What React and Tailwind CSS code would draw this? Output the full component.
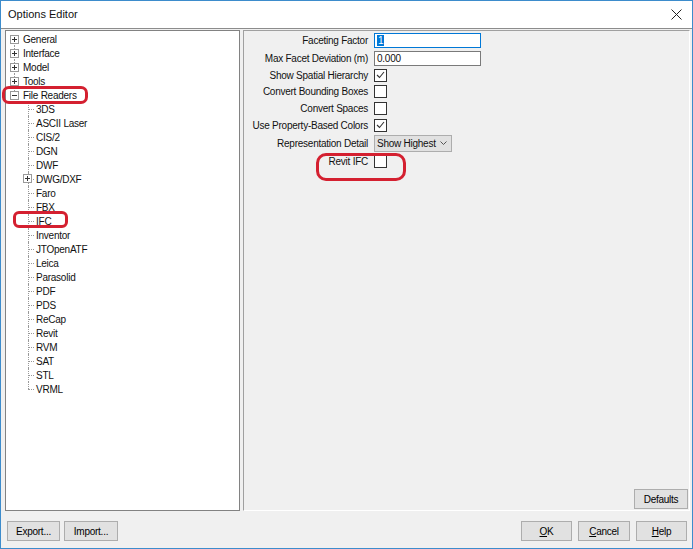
const roots = ["General", "Interface", "Model", "Tools"];
const readers = ["3DS", "ASCII Laser", "CIS/2", "DGN", "DWF", "DWG/DXF", "Faro", "FBX", "IFC", "Inventor", "JTOpenATF", "Leica", "Parasolid", "PDF", "PDS", "ReCap", "Revit", "RVM", "SAT", "STL", "VRML"];

function ExpandBox({ open }) {
  return (
    <div className="relative w-[9px] h-[9px] border border-[#9a9a9a] bg-white shrink-0">
      <div className="absolute left-[1px] top-[3px] w-[5px] h-px bg-[#333]" />
      {!open && <div className="absolute left-[3px] top-[1px] w-px h-[5px] bg-[#333]" />}
    </div>
  );
}

function Check({ checked }) {
  return (
    <div className="w-[13px] h-[13px] border border-[#333] bg-white flex items-center justify-center">
      {checked && (
        <svg width="9" height="8" viewBox="0 0 9 8">
          <path d="M1 4 L3.5 6.5 L8 1" fill="none" stroke="#333" strokeWidth="1.1" />
        </svg>
      )}
    </div>
  );
}

function Btn({ children, className = "" }) {
  return (
    <div className={"h-[20px] flex items-center justify-center bg-[#e1e1e1] border border-[#adadad] text-black " + className}>
      {children}
    </div>
  );
}

function Row({ label, h, children }) {
  return (
    <div className={"flex items-center " + h}>
      <div className="w-[130px] text-right pr-[6px] whitespace-nowrap">{label}</div>
      {children}
    </div>
  );
}

export default function App() {
  return (
    <div
      className="relative w-[693px] h-[549px] flex flex-col bg-[#f0f0f0] border border-[#3d8ccc] text-[10px] tracking-[-0.25px] text-[#111]"
      style={{ fontFamily: '"Liberation Sans", Arial, sans-serif' }}
    >
      <div className="h-[28px] bg-white flex items-center justify-between pl-[7px] pr-[10px] border-b border-[#8c8c8c]">
        <span className="text-[11px] tracking-normal">Options Editor</span>
        <svg width="11" height="11" viewBox="0 0 11 11">
          <path d="M0.5 0.5 L10.5 10.5 M10.5 0.5 L0.5 10.5" stroke="#222" strokeWidth="1" />
        </svg>
      </div>

      <div className="flex h-[482px] pl-[4px] pr-[2px] pt-px gap-[3px]">
        <div className="w-[235px] h-full bg-white border border-[#828282] pt-px">
          {roots.map((r, i) => (
            <div key={r} className="h-[14px] flex items-center">
              <div className="w-[16px] h-full relative flex items-center pl-[4px]">
                {i > 0 && <div className="absolute left-[8px] top-0 h-[3px] border-l border-dotted border-[#999]" />}
                <div className="absolute left-[8px] bottom-0 h-[3px] border-l border-dotted border-[#999]" />
                <ExpandBox />
              </div>
              <span className="pl-px">{r}</span>
            </div>
          ))}
          <div className="h-[14px] flex items-center">
            <div className="w-[16px] h-full relative flex items-center pl-[4px]">
              <div className="absolute left-[8px] top-0 h-[3px] border-l border-dotted border-[#999]" />
              <ExpandBox open />
            </div>
            <span className="pl-px">File Readers</span>
          </div>
          {readers.map((r, i) => {
            const last = i === readers.length - 1;
            return (
              <div key={r} className="h-[14px] flex items-center">
                <div className="w-[22px]" />
                <div className="relative w-[8px] h-full">
                  <div className={"absolute left-0 top-0 border-l border-dotted border-[#999] " + (last ? "h-[7px]" : "h-full")} />
                  <div className="absolute left-0 top-[7px] w-[6px] border-t border-dotted border-[#999]" />
                  {r === "DWG/DXF" && (
                    <div className="absolute left-[-5px] top-[2px]">
                      <ExpandBox />
                    </div>
                  )}
                </div>
                <span>{r}</span>
              </div>
            );
          })}
        </div>

        <div className="flex-1 h-full flex flex-col border border-l-[#a0a0a0] border-t-[#a0a0a0] border-r-white border-b-white">
          <div className="flex flex-col pt-px">
            <Row label="Faceting Factor" h="h-[17px]">
              <div className="w-[107px] h-[15px] bg-white border border-[#0078d7] flex items-center pl-[2px]">
                <span className="bg-[#0078d7] text-white px-px leading-[11px]">1</span>
              </div>
            </Row>
            <Row label="Max Facet Deviation (m)" h="h-[18px]">
              <div className="w-[107px] h-[15px] bg-white border border-[#7a7a7a] flex items-center pl-[2px]">0.000</div>
            </Row>
            <Row label="Show Spatial Hierarchy" h="h-[16px]">
              <Check checked />
            </Row>
            <Row label="Convert Bounding Boxes" h="h-[17px]">
              <Check />
            </Row>
            <Row label="Convert Spaces" h="h-[16px]">
              <Check />
            </Row>
            <Row label="Use Property-Based Colors" h="h-[18px]">
              <Check checked />
            </Row>
            <Row label="Representation Detail" h="h-[18px]">
              <div className="w-[78px] h-[17px] bg-[#e1e1e1] border border-[#adadad] flex items-center justify-between pl-[2px] pr-[4px]">
                <span>Show Highest</span>
                <svg width="7" height="4" viewBox="0 0 7 4">
                  <path d="M0.5 0.5 L3.5 3.5 L6.5 0.5" fill="none" stroke="#555" strokeWidth="1" />
                </svg>
              </div>
            </Row>
            <Row label="Revit IFC" h="h-[18px]">
              <Check />
            </Row>
          </div>
          <div className="flex-1" />
          <div className="flex justify-end pr-px pb-px">
            <Btn className="w-[54px]">Defaults</Btn>
          </div>
        </div>
      </div>

      <div className="flex items-center justify-between pl-[6px] pr-[5px] pt-[10px]">
        <div className="flex gap-[4px]">
          <Btn className="w-[53px]">Export...</Btn>
          <Btn className="w-[54px]">Import...</Btn>
        </div>
        <div className="flex gap-[6px]">
          <Btn className="w-[51px] border-[#0078d7]"><span><u>O</u>K</span></Btn>
          <Btn className="w-[52px]"><span><u>C</u>ancel</span></Btn>
          <Btn className="w-[51px]"><span><u>H</u>elp</span></Btn>
        </div>
      </div>

      <div className="absolute left-[1px] top-[85px] w-[86px] h-[18px] border-[3px] border-[#d42030] rounded-[7px]" />
      <div className="absolute left-[12px] top-[210px] w-[55px] h-[17px] border-[3px] border-[#d42030] rounded-[6px]" />
      <div className="absolute left-[315px] top-[152px] w-[90px] h-[28px] border-[3px] border-[#d42030] rounded-[10px]" />
    </div>
  );
}
